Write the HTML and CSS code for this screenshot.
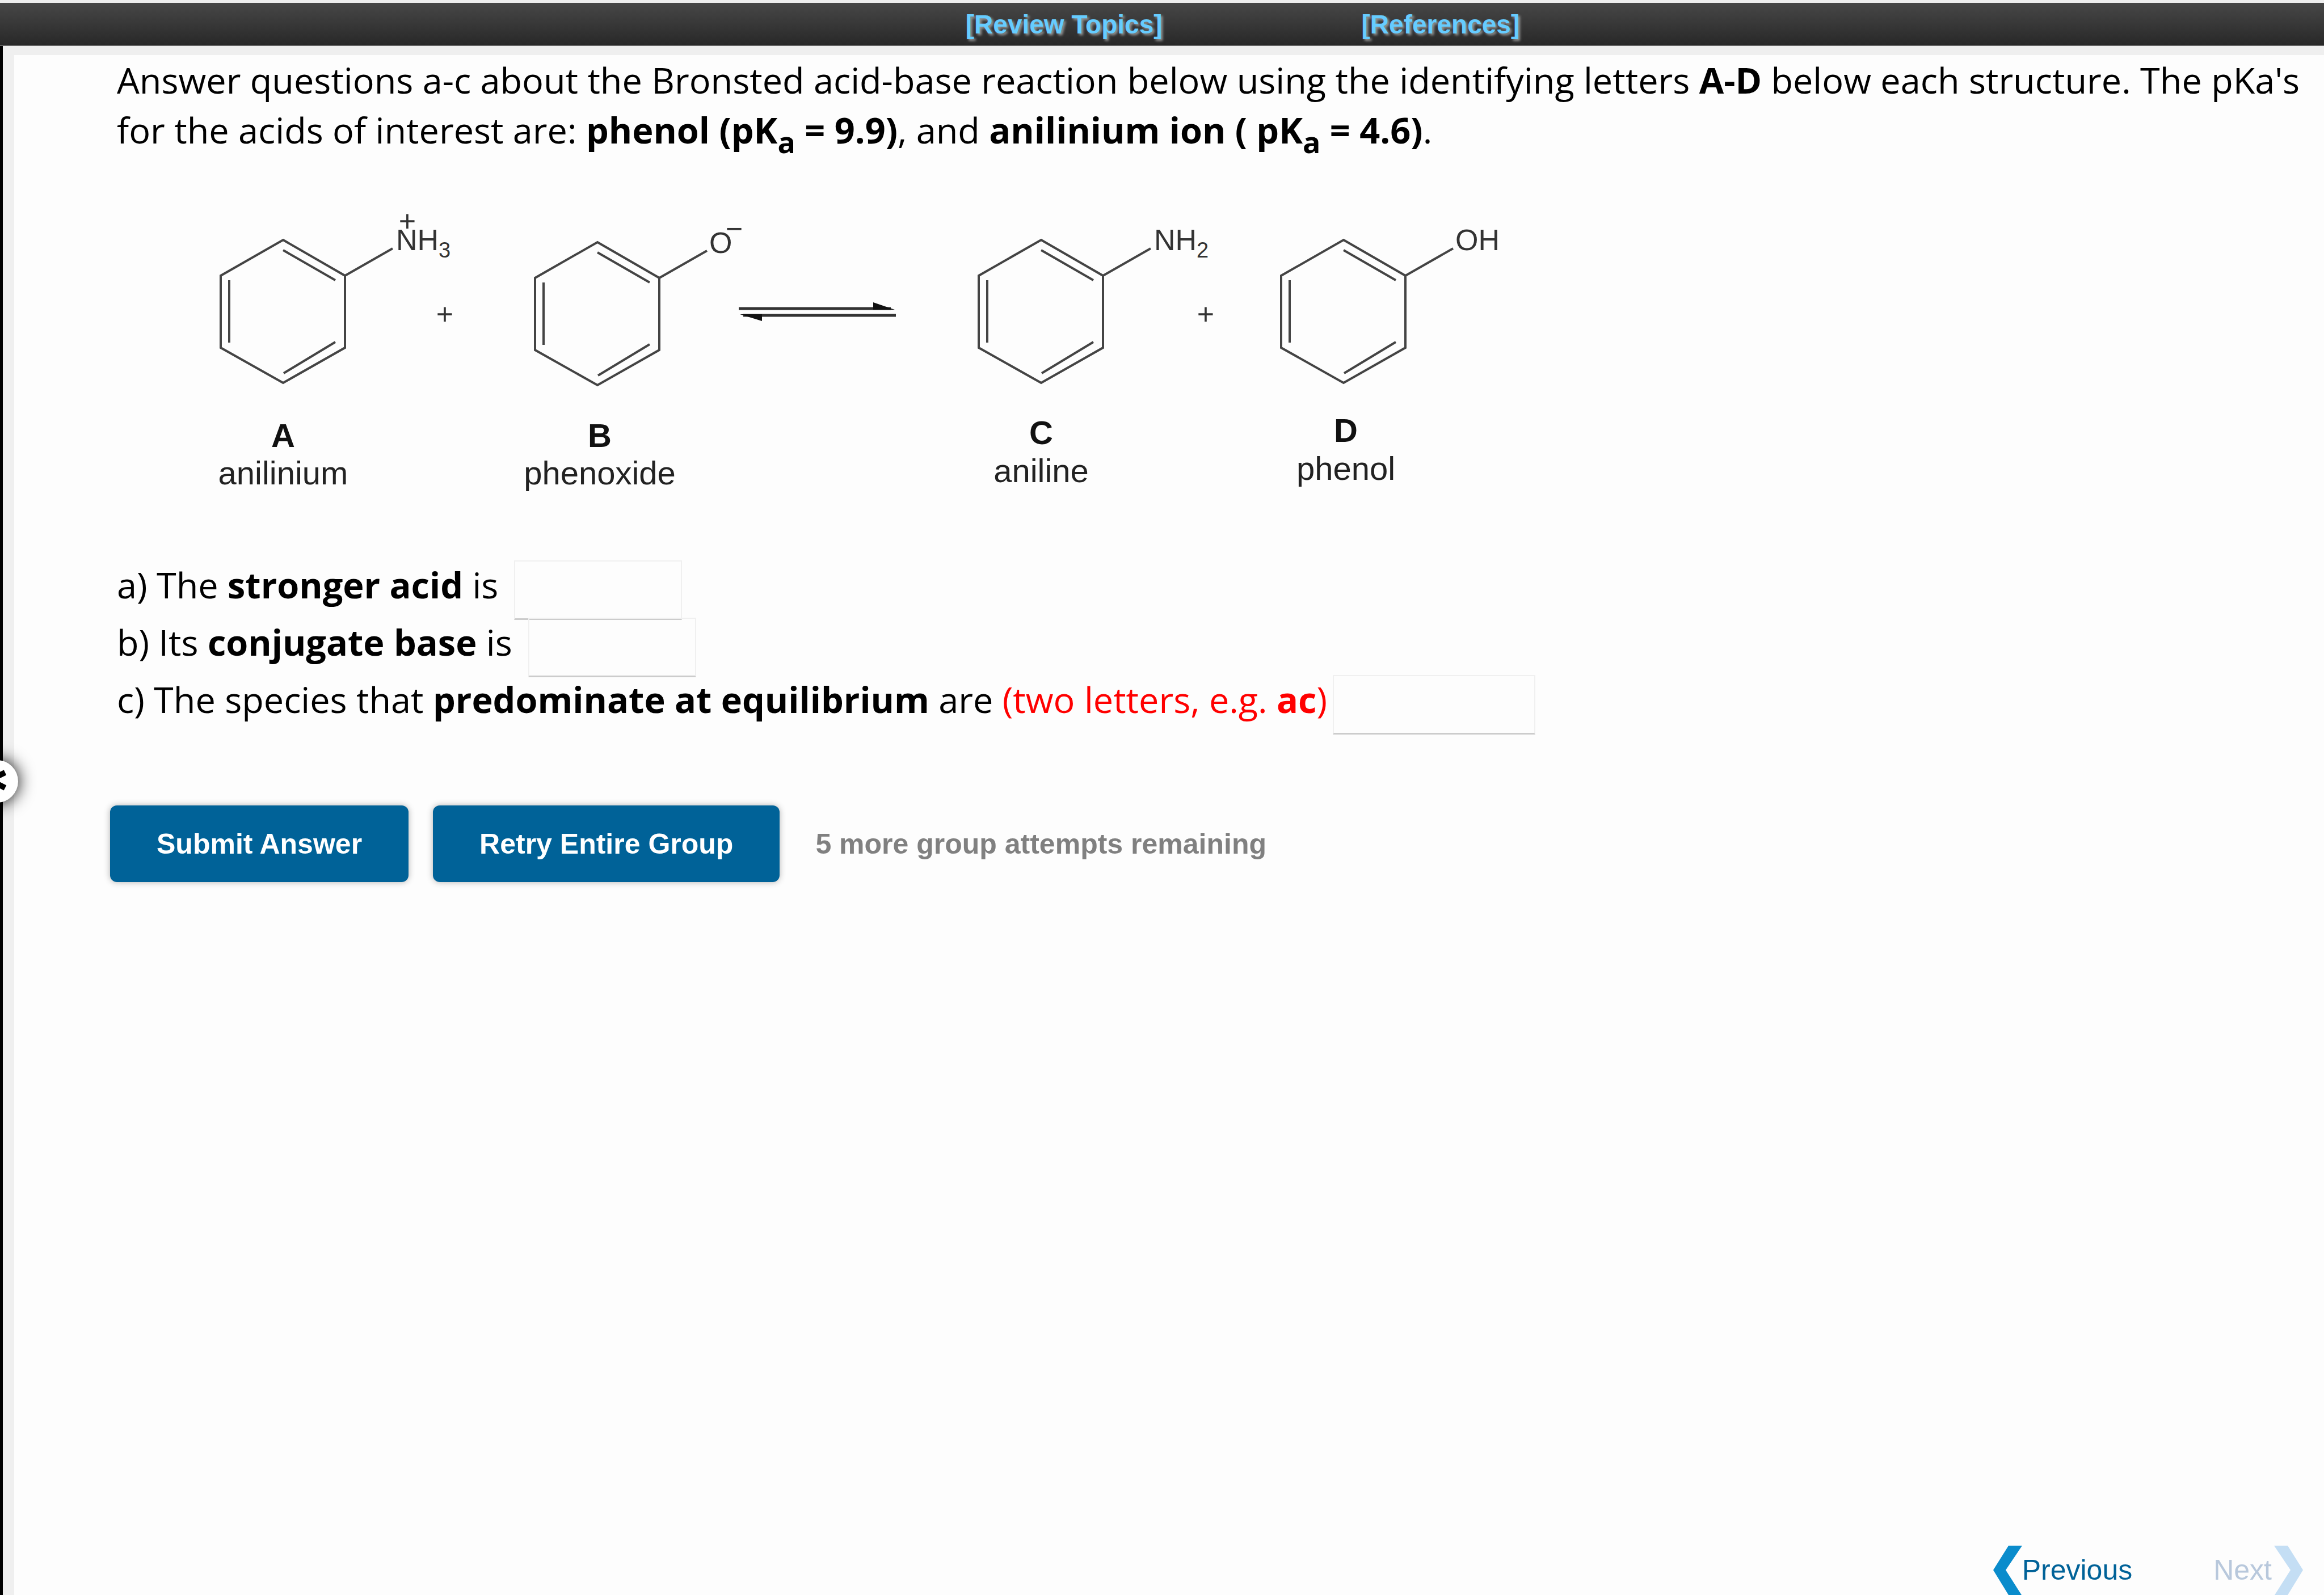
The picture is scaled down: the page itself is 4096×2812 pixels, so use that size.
FILE: index.html
```html
<!DOCTYPE html>
<html lang="en">
<head>
    <meta charset="UTF-8">
    <meta name="viewport" content="width=device-width, initial-scale=1.0">
    <title>Bronsted Acid-Base Reaction</title>
    <link rel="stylesheet" href="styles.css">
</head>
<body>
    <header class="toolbar">
        <a href="#topics">[Review Topics]</a>
        <a href="#references">[References]</a>
    </header>

    <main class="frame">
        <div class="panel">
            <p class="question">Answer questions a-c about the Bronsted acid-base reaction below using the identifying letters <b>A-D</b> below each structure. The pKa's for the acids of interest are: <b>phenol (pK<sub>a</sub> = 9.9)</b>, and <b>anilinium ion ( pK<sub>a</sub> = 4.6)</b>.</p>

            <svg class="reaction" viewBox="206 345 2480 560" role="img" aria-label="Reaction scheme">
                <defs>
                    <!-- benzene ring with one substituent bond -->
                    <g id="ring">
                        <path d="M499 423 L608 486 V613 L499 675 L389 613 V486 Z"/>
                        <path d="M499 441 L591 494 M404 494 V604 M591 603 L500 658"/>
                        <path d="M608 486 L692 438"/>
                    </g>
                </defs>

                <g class="bonds">
                    <use href="#ring"/>
                    <use href="#ring" x="554" y="4"/>
                    <use href="#ring" x="1336"/>
                    <use href="#ring" x="1869"/>
                </g>

                <g class="atoms">
                    <text x="718" y="408" text-anchor="middle">+</text>
                    <text x="698" y="441">NH<tspan class="small" dy="13">3</tspan></text>
                    <text x="784" y="572" text-anchor="middle">+</text>
                    <text x="1250" y="446">O</text>
                    <text x="1294" y="421" text-anchor="middle">−</text>
                    <text x="2034" y="441">NH<tspan class="small" dy="13">2</tspan></text>
                    <text x="2125" y="572" text-anchor="middle">+</text>
                    <text x="2565" y="441">OH</text>
                </g>

                <!-- equilibrium arrows -->
                <g class="arrows">
                    <path class="shaft" d="M1302 544 H1570 M1310 556 H1579"/>
                    <path class="head" d="M1539 533 L1577 546 H1539 Z M1343 566 L1304 554 H1343 Z"/>
                </g>

                <g class="names" text-anchor="middle">
                    <text x="499" y="788" class="letter">A</text>
                    <text x="499" y="854">anilinium</text>
                    <text x="1057" y="788" class="letter">B</text>
                    <text x="1057" y="854">phenoxide</text>
                    <text x="1835" y="783" class="letter">C</text>
                    <text x="1835" y="850">aniline</text>
                    <text x="2372" y="779" class="letter">D</text>
                    <text x="2372" y="846">phenol</text>
                </g>
            </svg>

            <form class="answers">
                <div class="row">
                    <label for="acid">a) The <b>stronger acid</b> is</label>
                    <input type="text" id="acid">
                </div>
                <div class="row">
                    <label for="base">b) Its <b>conjugate base</b> is</label>
                    <input type="text" id="base">
                </div>
                <div class="row">
                    <label for="species">c) The species that <b>predominate at equilibrium</b> are <span class="hint">(two letters, e.g. <b>ac</b>)</span></label>
                    <input type="text" id="species" class="wide">
                </div>

                <div class="actions">
                    <button type="button">Submit Answer</button>
                    <button type="button">Retry Entire Group</button>
                    <span class="attempts">5 more group attempts remaining</span>
                </div>
            </form>

            <nav class="pager">
                <a href="#previous" class="previous">
                    <svg width="51" height="87" viewBox="0 0 51 87" aria-hidden="true"><path d="M27 0 H51 L22 43 L50 87 H27 L0 43 Z"/></svg>
                    Previous
                </a>
                <a href="#next" class="next" aria-disabled="true">
                    Next
                    <svg width="51" height="87" viewBox="0 0 51 87" aria-hidden="true"><path d="M24 0 H0 L29 43 L1 87 H24 L51 43 Z"/></svg>
                </a>
            </nav>
        </div>
    </main>

    <button type="button" class="drawer" aria-label="Open menu">
        <svg width="75" height="75" viewBox="0 0 75 75" aria-hidden="true"><path d="M52 22 L25 35 L52 49"/></svg>
    </button>
</body>
</html>
```
FILE: styles.css
```css
body {
    display: flex;
    flex-direction: column;
    min-height: 100vh;
    margin: 0;
    overflow-x: hidden;
    background-color: #fdfdfd;
    font-family: "Open Sans", sans-serif;
    font-size: 63px;
    line-height: 88px;
    color: #000;
}

/* top bar */
.toolbar {
    display: flex;
    justify-content: center;
    align-items: center;
    gap: 351px;
    box-sizing: border-box;
    height: 81px;
    padding-left: 284px;
    border-top: 5px solid #eee;
    border-bottom: 1px solid #777;
    background: linear-gradient(#474747, #282828);
}

.toolbar a {
    font-family: "Liberation Sans", Arial, sans-serif;
    font-size: 46px;
    font-weight: bold;
    line-height: 52px;
    color: #6cf;
    text-decoration: none;
    text-shadow: 3px 3px 4px #999;
}

.frame {
    display: flex;
    flex: 1;
    border-left: 5px solid #000;
}

.panel {
    display: flex;
    flex: 1;
    flex-direction: column;
    padding-left: 181px;
    border-top: 16px solid #efefef;
    border-left: 20px solid #efefef;
}

.question {
    margin: 0 20px 72px 0;
}

sub {
    font-size: 52px;
    line-height: 0;
    vertical-align: -17px;
}

/* reaction scheme */
.reaction {
    display: block;
    width: 2480px;
    height: 560px;
    font-family: "Liberation Sans", Arial, sans-serif;
}

.bonds {
    fill: none;
    stroke: #444;
    stroke-width: 4px;
}

.atoms {
    font-size: 52px;
    fill: #333;
}

.small {
    font-size: 38px;
}

.shaft {
    stroke: #333;
    stroke-width: 5px;
}

.head {
    fill: #111;
}

.names {
    font-size: 58px;
    fill: #222;
}

.letter {
    font-weight: bold;
    fill: #111;
}

/* answers */
.answers {
    margin-top: 83px;
}

.row {
    display: flex;
    align-items: flex-start;
    height: 101px;
}

.row label {
    line-height: 86px;
}

.row input {
    box-sizing: border-box;
    width: 296px;
    height: 105px;
    margin-left: 28px;
    padding: 0 16px;
    border: 2px solid #f0f0f0;
    border-bottom: 3px solid #ccc;
    background-color: transparent;
    font: inherit;
    outline: none;
}

.row .wide {
    width: 357px;
    margin-left: 10px;
}

.hint {
    color: #f00;
}

.actions {
    display: flex;
    align-items: center;
    gap: 43px;
    margin: 129px 0 0 -12px;
    font-family: "Liberation Sans", Arial, sans-serif;
    font-size: 50px;
    font-weight: bold;
}

.actions button {
    height: 135px;
    padding: 0 82px;
    border: none;
    border-radius: 12px;
    background-color: #006298;
    box-shadow: 0 0 12px rgba(0, 0, 0, 0.3);
    color: #fff;
    font: inherit;
    cursor: pointer;
}

.attempts {
    margin-left: 20px;
    color: #808080;
}

/* previous / next */
.pager {
    display: flex;
    justify-content: flex-end;
    gap: 143px;
    margin-top: auto;
    padding-right: 37px;
    font-family: "Liberation Sans", Arial, sans-serif;
    font-size: 50px;
}

.pager a {
    display: flex;
    align-items: center;
    line-height: 87px;
    text-decoration: none;
}

.previous {
    color: #006298;
}

.previous svg {
    fill: #0a8ccc;
}

.next {
    gap: 4px;
    color: #b8c8dc;
}

.next svg {
    fill: #c4def4;
}

/* round handle on the left edge */
.drawer {
    position: absolute;
    top: 1340px;
    left: -43px;
    width: 75px;
    height: 75px;
    padding: 0;
    border: none;
    border-radius: 50%;
    background-color: #fff;
    box-shadow: 0 0 30px #000;
    cursor: pointer;
}

.drawer svg {
    display: block;
    fill: none;
    stroke: #000;
    stroke-width: 10px;
}
```
